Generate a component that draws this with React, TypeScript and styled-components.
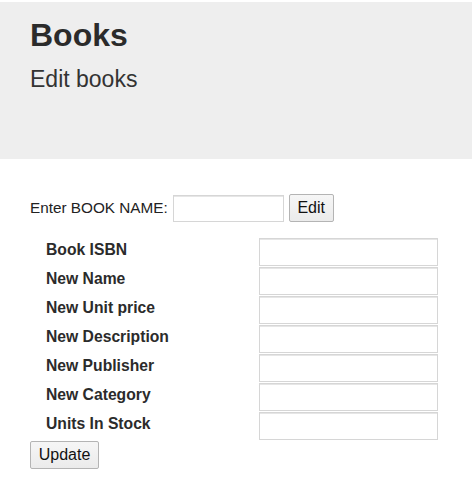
import React from 'react';
import styled, { createGlobalStyle } from 'styled-components';

const GlobalStyle = createGlobalStyle`
  html, body {
    margin: 0;
    padding: 0;
    background: #fff;
  }
  body {
    font-family: "Liberation Sans", Arial, Helvetica, sans-serif;
    color: #333;
  }
`;

const fields = [
  'Book ISBN',
  'New Name',
  'New Unit price',
  'New Description',
  'New Publisher',
  'New Category',
  'Units In Stock',
];

const Page = styled.div`
  width: 474px;
`;

const Jumbotron = styled.header`
  margin-top: 2px;
  width: 472px;
  height: 157px;
  box-sizing: border-box;
  padding: 14px 30px 0;
  background: #eee;
`;

const Title = styled.h1`
  margin: 0;
  font-size: 32px;
  line-height: 38px;
  font-weight: bold;
  color: #2b2b2b;
`;

const Lead = styled.p`
  margin: 11px 0 0;
  font-size: 23px;
  line-height: 28px;
  font-weight: normal;
  color: #333;
`;

const Content = styled.main`
  padding: 35px 0 0 30px;
`;

const SearchRow = styled.div`
  display: flex;
  align-items: center;
  height: 28px;
  font-size: 15.3px;
  color: #222;
`;

const SearchLabel = styled.label`
  margin-right: 5px;
`;

const TextInput = styled.input<{ $width: number; $height: number }>`
  box-sizing: border-box;
  width: ${(p) => p.$width}px;
  height: ${(p) => p.$height}px;
  margin: 0;
  padding: 2px 4px;
  border: 1px solid #d6d6d6;
  box-shadow: inset 0 1px 0 #e6e6e6;
  background: #fff;
  font: inherit;
`;

const Button = styled.button<{ $width: number }>`
  box-sizing: border-box;
  width: ${(p) => p.$width}px;
  height: 28px;
  margin: 0;
  padding: 0;
  border: 1px solid #b4b4b4;
  border-radius: 2px;
  background: linear-gradient(#f6f6f6, #ebebeb);
  font-family: "Liberation Sans", Arial, sans-serif;
  font-size: 16px;
  color: #111;
`;

const EditButton = styled(Button)`
  margin-left: 5px;
`;

const FieldGrid = styled.div`
  display: grid;
  grid-template-columns: 229px 179px;
  grid-auto-rows: 28px;
  row-gap: 1px;
  margin-top: 16px;
`;

const FieldLabel = styled.label`
  padding: 2px 0 0 16px;
  font-size: 15.7px;
  font-weight: bold;
  line-height: 20px;
  color: #2b2b2b;
`;

const UpdateRow = styled.div`
  margin-top: 1px;
`;

export default function App() {
  return (
    <Page>
      <GlobalStyle />
      <Jumbotron>
        <Title>Books</Title>
        <Lead>Edit books</Lead>
      </Jumbotron>
      <Content>
        <SearchRow>
          <SearchLabel>Enter BOOK NAME:</SearchLabel>
          <TextInput $width={111} $height={27} />
          <EditButton $width={45}>Edit</EditButton>
        </SearchRow>
        <FieldGrid>
          {fields.map((name) => (
            <React.Fragment key={name}>
              <FieldLabel>{name}</FieldLabel>
              <TextInput $width={179} $height={28} />
            </React.Fragment>
          ))}
        </FieldGrid>
        <UpdateRow>
          <Button $width={69}>Update</Button>
        </UpdateRow>
      </Content>
    </Page>
  );
}
